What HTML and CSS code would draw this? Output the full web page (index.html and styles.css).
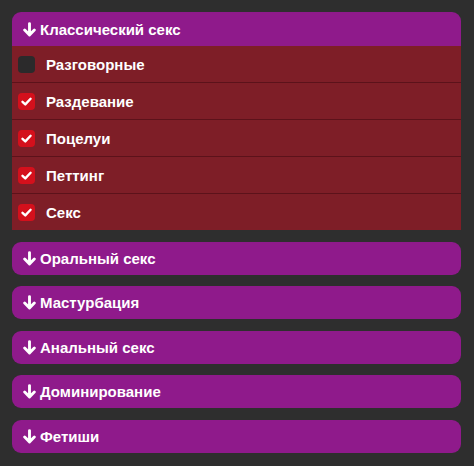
FILE: index.html
```html
<!DOCTYPE html>
<html>
<head>
<meta charset="utf-8">
<link rel="stylesheet" href="styles.css">
</head>
<body>
<div class="list">
  <section class="group open">
    <div class="head"><svg class="arrow" viewBox="0 0 12 14"><path d="M6 1.5V12M1.5 7.5L6 12L10.5 7.5" /></svg><span>Классический секс</span></div>
    <div class="items">
      <div class="row"><span class="box"></span><span>Разговорные</span></div>
      <div class="row"><span class="box on"><svg viewBox="0 0 17 17"><path d="M4.5 8.8L7.3 11.4L12.6 5.8"/></svg></span><span>Раздевание</span></div>
      <div class="row"><span class="box on"><svg viewBox="0 0 17 17"><path d="M4.5 8.8L7.3 11.4L12.6 5.8"/></svg></span><span>Поцелуи</span></div>
      <div class="row"><span class="box on"><svg viewBox="0 0 17 17"><path d="M4.5 8.8L7.3 11.4L12.6 5.8"/></svg></span><span>Петтинг</span></div>
      <div class="row"><span class="box on"><svg viewBox="0 0 17 17"><path d="M4.5 8.8L7.3 11.4L12.6 5.8"/></svg></span><span>Секс</span></div>
    </div>
  </section>
  <section class="group"><div class="head"><svg class="arrow" viewBox="0 0 12 14"><path d="M6 1.5V12M1.5 7.5L6 12L10.5 7.5" /></svg><span>Оральный секс</span></div></section>
  <section class="group"><div class="head"><svg class="arrow" viewBox="0 0 12 14"><path d="M6 1.5V12M1.5 7.5L6 12L10.5 7.5" /></svg><span>Мастурбация</span></div></section>
  <section class="group"><div class="head"><svg class="arrow" viewBox="0 0 12 14"><path d="M6 1.5V12M1.5 7.5L6 12L10.5 7.5" /></svg><span>Анальный секс</span></div></section>
  <section class="group"><div class="head"><svg class="arrow" viewBox="0 0 12 14"><path d="M6 1.5V12M1.5 7.5L6 12L10.5 7.5" /></svg><span>Доминирование</span></div></section>
  <section class="group"><div class="head"><svg class="arrow" viewBox="0 0 12 14"><path d="M6 1.5V12M1.5 7.5L6 12L10.5 7.5" /></svg><span>Фетиши</span></div></section>
</div>
</body>
</html>
```
FILE: styles.css
```css
html, body { margin: 0; padding: 0; }
body {
  background: #2e2e2e;
  font-family: "Liberation Sans", Arial, sans-serif;
  font-weight: bold;
  color: #ffffff;
}
.list {
  width: 449px;
  padding: 12px 0 0 12px;
  display: flex;
  flex-direction: column;
  gap: 11.5px;
}
.group { border-radius: 9px; overflow: hidden; }
.group.open { border-radius: 9px 9px 0 0; }
.head {
  background: #8f1a8b;
  height: 33px;
  display: flex;
  align-items: center;
  padding-left: 11px;
  font-size: 15px;
  gap: 4px;
}
.open .head { height: 34px; }
.arrow { width: 13px; height: 15px; fill: none; stroke: #fff; stroke-width: 2.7; stroke-linecap: round; stroke-linejoin: round; }
.items { background: #7e1e27; }
.row {
  height: 36px;
  display: flex;
  align-items: center;
  padding-left: 6px;
  gap: 11px;
  font-size: 15px;
  border-bottom: 1px solid #5c121a;
}
.row:last-child { border-bottom: none; }
.box {
  width: 17px;
  height: 17px;
  border-radius: 4px;
  background: #2b2a2b;
  display: flex;
}
.box.on { background: #d4101c; }
.box svg { width: 17px; height: 17px; fill: none; stroke: #fff; stroke-width: 2.4; stroke-linecap: round; stroke-linejoin: round; }
```
